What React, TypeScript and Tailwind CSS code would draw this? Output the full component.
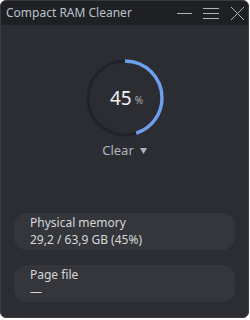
import React from "react";

function Gauge({ percent }: { percent: number }) {
  const r = 37;
  const c = 2 * Math.PI * r;
  return (
    <svg width="80" height="80" viewBox="0 0 80 80" className="block">
      <circle cx="40" cy="40" r={r} fill="none" stroke="#222328" strokeWidth="3" />
      <circle
        cx="40"
        cy="40"
        r={r}
        fill="none"
        stroke="#6e9ef0"
        strokeWidth="3.5"
        strokeDasharray={`${(c * percent) / 100} ${c}`}
        transform="rotate(-90 40 40)"
      />
    </svg>
  );
}

export default function App() {
  return (
    <div className="h-[320px] w-[250px] bg-white" style={{ fontFamily: '"Noto Sans", "Open Sans", sans-serif' }}>
      <div className="flex h-[318px] w-[249px] flex-col overflow-hidden rounded-[6px] border border-[#3a3b40] bg-[#2c2d32]">
        <div className="flex h-[24px] shrink-0 items-center bg-[#1f2024] pl-[5px] pr-[3px]">
          <span className="flex-1 text-[12px] leading-none text-[#b9c3cd]">Compact RAM Cleaner</span>
          <div className="flex items-center gap-[11px] text-[#aeb3b9]">
            <svg width="15" height="15" viewBox="0 0 15 15">
              <line x1="0" y1="7.5" x2="15" y2="7.5" stroke="currentColor" strokeWidth="1" />
            </svg>
            <svg width="16" height="15" viewBox="0 0 16 15">
              <line x1="0" y1="2.5" x2="16" y2="2.5" stroke="currentColor" strokeWidth="1" />
              <line x1="0" y1="7.5" x2="16" y2="7.5" stroke="currentColor" strokeWidth="1" />
              <line x1="0" y1="12.5" x2="16" y2="12.5" stroke="currentColor" strokeWidth="1" />
            </svg>
            <svg width="15" height="15" viewBox="0 0 15 15">
              <line x1="1" y1="1" x2="14" y2="14" stroke="currentColor" strokeWidth="1" />
              <line x1="14" y1="1" x2="1" y2="14" stroke="currentColor" strokeWidth="1" />
            </svg>
          </div>
        </div>

        <div className="flex flex-col items-center pt-[33px]">
          <div className="relative">
            <Gauge percent={45} />
            <div className="absolute inset-0 flex items-center justify-center pl-[4px]">
              <span className="text-[19px] leading-none text-[#f2f2f2]">45</span>
              <span className="ml-[3px] mt-[3px] text-[10px] leading-none text-[#a9b0b8]">%</span>
            </div>
          </div>
          <div className="mt-[6px] flex items-center gap-[6px] text-[13px] leading-none text-[#aeb6bf]">
            <span>Clear</span>
            <svg width="7" height="6" viewBox="0 0 7 6">
              <path d="M0 0 H7 L3.5 6 Z" fill="currentColor" />
            </svg>
          </div>
        </div>

        <div className="mt-[56px] flex flex-col gap-[15px] px-[13px]">
          <div className="flex h-[37px] flex-col justify-center gap-[3px] rounded-[13px] bg-[#35363b] pl-[16px] text-[12px] leading-[14px] text-[#d4d6d9]">
            <span>Physical memory</span>
            <span>29,2 / 63,9 GB (45%)</span>
          </div>
          <div className="flex h-[37px] flex-col justify-center gap-[3px] rounded-[13px] bg-[#35363b] pl-[16px] text-[12px] leading-[14px] text-[#d4d6d9]">
            <span>Page file</span>
            <span>—</span>
          </div>
        </div>
      </div>
    </div>
  );
}
